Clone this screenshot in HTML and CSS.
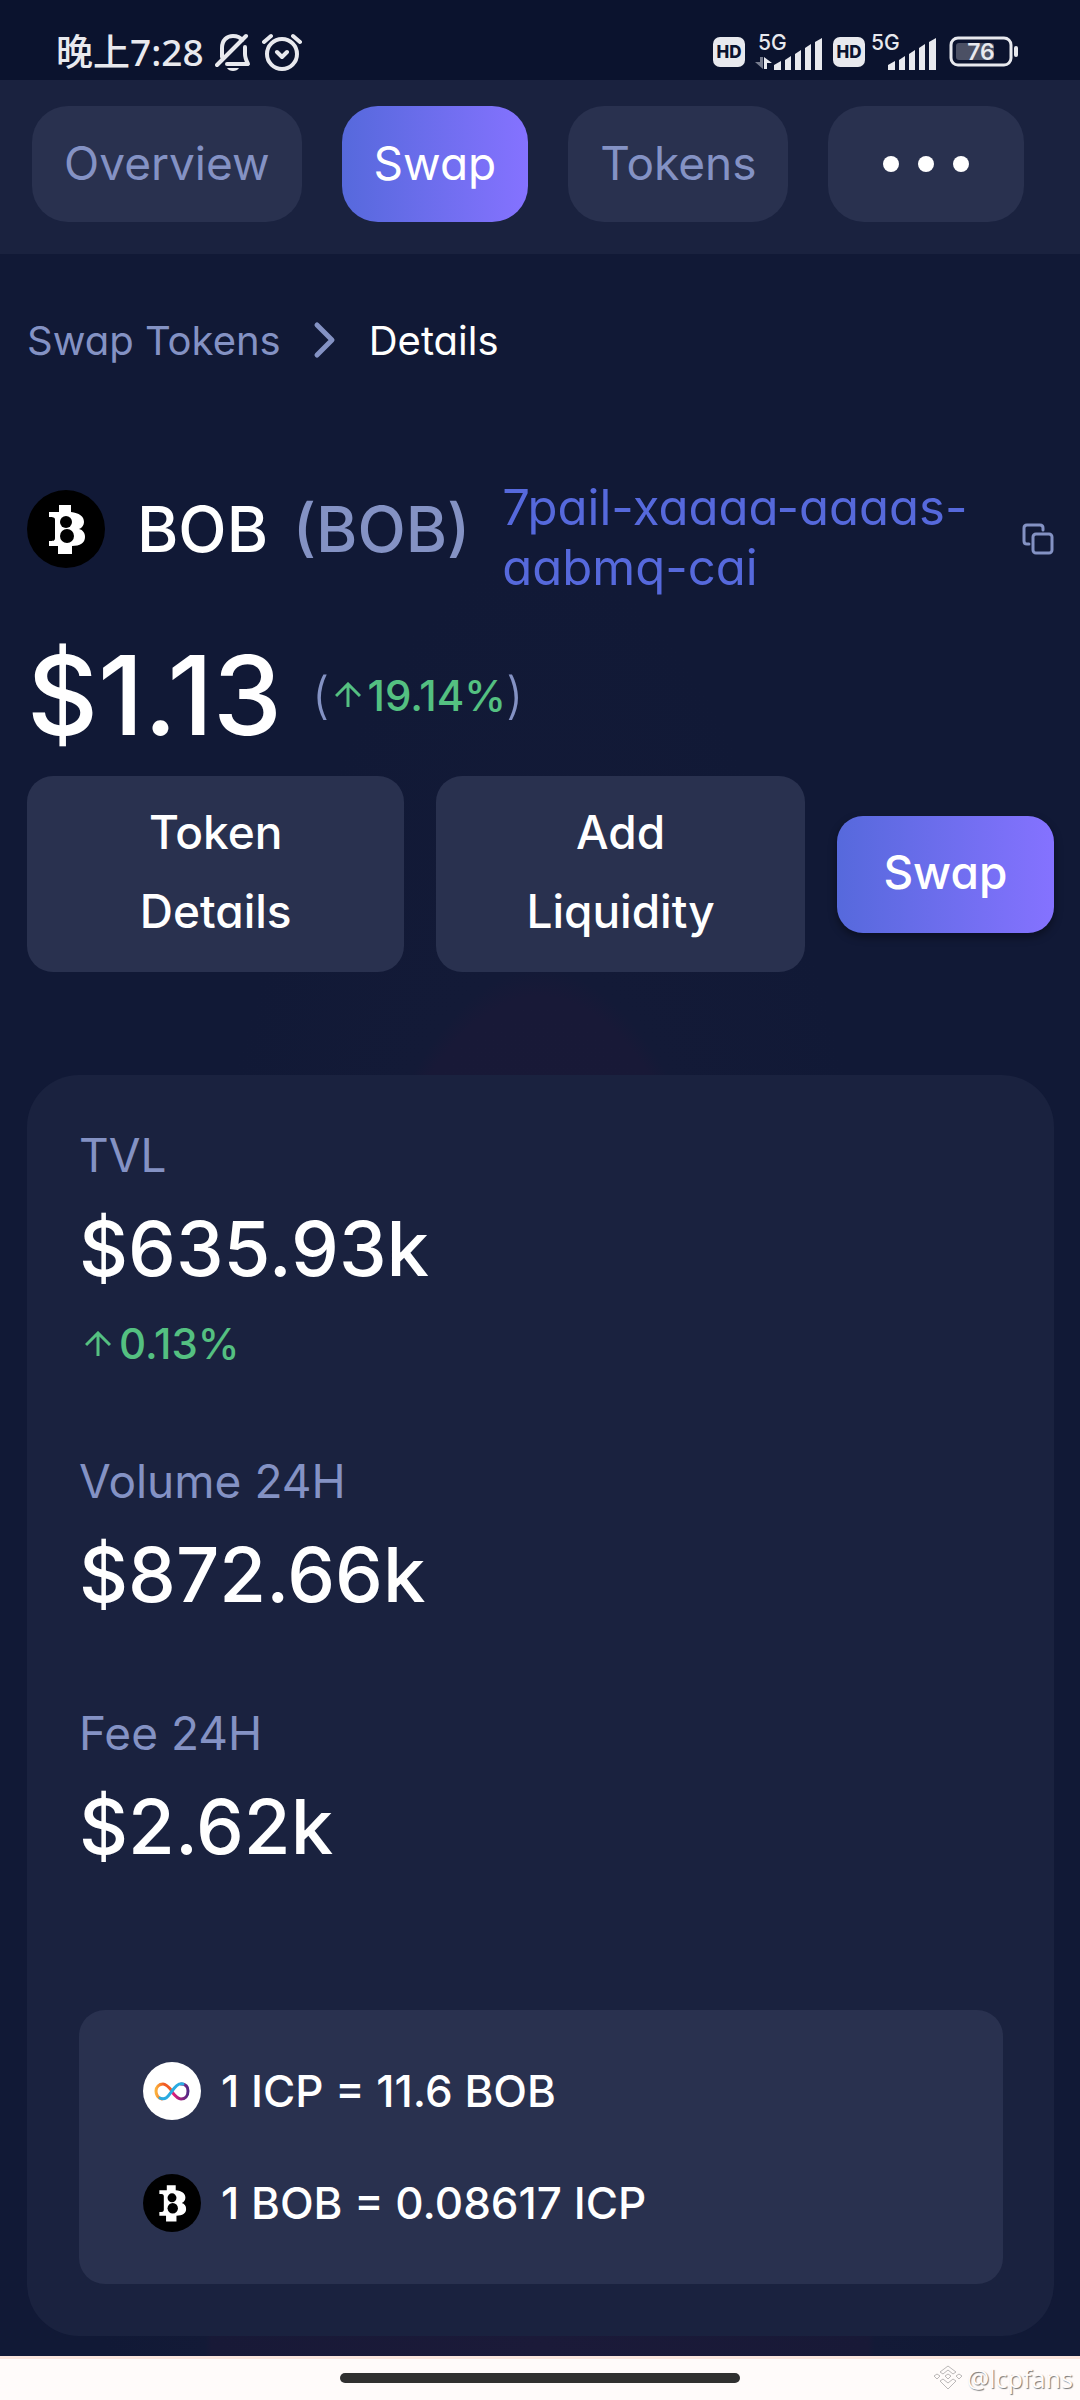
FILE: index.html
```html
<!DOCTYPE html>
<html lang="en">
<head>
<meta charset="utf-8">
<meta name="viewport" content="width=device-width, initial-scale=1">
<title>Swap – BOB details</title>
<link rel="stylesheet" href="styles.css">
</head>
<body>
<svg class="defs" aria-hidden="true">
  <symbol id="bitcoin" viewBox="0 0 78 78">
    <circle cx="39" cy="39" r="39" fill="#000"/>
    <path fill="#fff" d="M32 15h12v7c8 1 13 4 13 10c0 3-2 6-5 7c4 1 6 4 6 8c0 6-5 9-13 9v8H31v-8h-9v-5c4 0 6 0 6-3V30c0-3-2-3-6-3v-5h10z"/>
    <circle cx="39" cy="32" r="6" fill="#000"/>
    <circle cx="40" cy="46" r="7" fill="#000"/>
  </symbol>
  <symbol id="arrow-up" viewBox="0 0 26 26">
    <path d="M13 25V2M1 14L13 2l12 12" fill="none" stroke="currentColor" stroke-width="3"/>
  </symbol>
</svg>

<header class="status">
  <span class="clock">晚上7:28</span>
  <svg class="status-icon" width="36" height="38" viewBox="0 0 36 38" aria-label="Muted">
    <g fill="none" stroke="currentColor" stroke-width="4" stroke-linecap="round" stroke-linejoin="round">
      <path d="M7 24V15C7 7 12 3 18 3c4 0 7 1 9 4"/>
      <path d="M30 14v7c0 4 1 6 3 10H12"/>
      <path d="M2 32L31 3"/>
    </g>
    <path d="M12 35h12c-2 4-10 4-12 0z" fill="currentColor"/>
  </svg>
  <svg class="status-icon" width="40" height="38" viewBox="0 0 40 38" aria-label="Alarm">
    <g fill="none" stroke="currentColor" stroke-width="4" stroke-linecap="round" stroke-linejoin="round">
      <circle cx="20" cy="21" r="15"/>
      <path d="M15 19l5 5 5-5M2 9l7-6M38 9l-7-6"/>
    </g>
  </svg>
  <div class="status-right">
    <span class="hd">HD</span>
    <svg class="signal signal-wide" width="68" height="44" viewBox="0 -3 68 44">
      <text x="3" y="17" class="net">5G</text>
      <path fill="#777c8e" d="M5 24h3v12L0 29h5z"/>
      <path fill="currentColor" d="M9 36V24l8 6h-5v6zM19 37v-5l7-4v9zM30 37V27l6-4v14zM40 37V21l6-4v20zM50 37V15l6-4v26zM60 37V9l7-4v32z"/>
    </svg>
    <span class="hd">HD</span>
    <svg class="signal" width="68" height="44" viewBox="0 -3 68 44">
      <text x="2" y="17" class="net">5G</text>
      <path fill="currentColor" d="M19 37v-5l7-4v9zM30 37V27l6-4v14zM40 37V21l6-4v20zM50 37V15l6-4v26zM60 37V9l7-4v32z"/>
    </svg>
    <svg class="battery" width="70" height="32" viewBox="0 0 70 32">
      <rect x="2" y="2" width="60" height="27" rx="7" fill="none" stroke="currentColor" stroke-width="3"/>
      <rect x="7" y="7" width="38" height="17" rx="3" fill="#4b5064"/>
      <rect x="65" y="10" width="4" height="11" rx="2" fill="currentColor"/>
      <text x="32" y="24" text-anchor="middle" class="level">76</text>
    </svg>
  </div>
</header>

<nav class="tabs">
  <button class="tab">Overview</button>
  <button class="tab tab-active">Swap</button>
  <button class="tab">Tokens</button>
  <button class="tab tab-more" aria-label="More"><i></i><i></i><i></i></button>
</nav>

<main class="page">
  <div class="crumbs">
    <a href="#">Swap Tokens</a>
    <svg width="24" height="38" viewBox="0 0 24 38" fill="none" stroke="currentColor" stroke-width="5" stroke-linecap="round" stroke-linejoin="round"><path d="M4 4l15 15L4 34"/></svg>
    <span>Details</span>
  </div>

  <div class="token">
    <svg class="token-logo"><use href="#bitcoin"/></svg>
    <h1 class="token-name">BOB <span>(BOB)</span></h1>
    <a class="address" href="#">7pail-xaaaa-aaaas-aabmq-cai</a>
    <button class="copy" aria-label="Copy">
      <svg width="32" height="32" viewBox="0 0 32 32" fill="none" stroke="currentColor" stroke-width="3" stroke-linecap="round"><rect x="11" y="11" width="19" height="19" rx="3"/><path d="M7 21H5c-2 0-3-1-3-3V5c0-2 1-3 3-3h13c2 0 3 1 3 3v2"/></svg>
    </button>
  </div>

  <div class="price">
    <strong>$1.13</strong>
    <span class="paren">(</span><svg class="up"><use href="#arrow-up"/></svg><span class="change">19.14%</span><span class="paren">)</span>
  </div>

  <div class="actions">
    <button class="action">Token Details</button>
    <button class="action">Add Liquidity</button>
    <button class="action action-primary">Swap</button>
  </div>

  <section class="card">
    <dl class="stats">
      <div class="stat">
        <dt>TVL</dt>
        <dd>$635.93k</dd>
        <dd class="delta"><svg class="up"><use href="#arrow-up"/></svg>0.13%</dd>
      </div>
      <div class="stat">
        <dt>Volume 24H</dt>
        <dd>$872.66k</dd>
      </div>
      <div class="stat">
        <dt>Fee 24H</dt>
        <dd>$2.62k</dd>
      </div>
    </dl>
    <div class="rates">
      <div class="rate">
        <svg class="coin" viewBox="0 0 58 58">
          <defs>
            <linearGradient id="warm" x1="0" x2="1"><stop offset="0" stop-color="#fbb03b"/><stop offset=".5" stop-color="#f15a24"/></linearGradient>
            <linearGradient id="violet" x1="0" x2="1"><stop offset="0" stop-color="#ed1e79"/><stop offset="1" stop-color="#522785"/></linearGradient>
          </defs>
          <circle cx="29" cy="29" r="29" fill="#fff"/>
          <g fill="none" stroke-width="3" stroke-linecap="round">
            <path stroke="url(#violet)" d="M29 30C33 35 35 37 38 37c4 0 7-3 7-8s-3-7-7-7"/>
            <path stroke="url(#warm)" d="M29 29C25 24 23 22 20 22c-4 0-7 3-7 7s2 7 6 8"/>
            <path stroke="#29abe2" d="M17 36c6 3 9-3 12-7S35 21 40 22"/>
          </g>
        </svg>
        <span>1 ICP = 11.6 BOB</span>
      </div>
      <div class="rate">
        <svg class="coin"><use href="#bitcoin"/></svg>
        <span>1 BOB = 0.08617 ICP</span>
      </div>
    </div>
  </section>
</main>

<footer class="gesture">
  <div class="handle"></div>
  <div class="watermark">
    <svg width="30" height="26" viewBox="0 0 30 26" fill="none" stroke="#bbb8b8" stroke-width="1"><path d="M7 7l8-6 8 6-3 2-5-4-5 4zM1 11l3-2 3 2-3 3zM12 11l3-2 3 2-3 3zM23 11l3-2 3 2-3 3zM7 16l3-2 5 4 5-4 3 2-8 8z"/></svg>
    <span>@lcpfans</span>
  </div>
</footer>
</body>
</html>
```
FILE: styles.css
```css
* { box-sizing: border-box; margin: 0; }

body {
  min-height: 100vh;
  display: flex;
  flex-direction: column;
  background: #111936;
  color: #fff;
  font-family: Inter, "Noto Sans", "Noto Sans CJK SC", sans-serif;
  font-feature-settings: "cv11";
  font-size: 46px;
}

button {
  border: 0;
  padding: 0;
  background: none;
  color: inherit;
  font: inherit;
  font-feature-settings: inherit;
}

a { text-decoration: none; }
svg { display: block; flex: none; }
.defs { position: absolute; width: 0; height: 0; }

/* Phone status bar */
.status {
  height: 80px;
  padding: 24px 61px 0 56px;
  display: flex;
  align-items: center;
  background: #0b132e;
  color: #e8e9ee;
}
.clock {
  font-family: "Noto Sans", "Noto Sans CJK SC", sans-serif;
  font-weight: 500;
  font-size: 37px;
  line-height: 40px;
}
.status-icon { margin-left: 11px; }
.status-right {
  margin-left: auto;
  display: flex;
  align-items: center;
}
.hd {
  width: 32px;
  height: 30px;
  border-radius: 7px;
  background: #e8e9ee;
  color: #0b132e;
  font-size: 17px;
  font-weight: 800;
  line-height: 30px;
  text-align: center;
}
.signal { margin: 0 12px 0 4px; }
.signal-wide { margin: 0 10px; }
.net { font-size: 21px; font-weight: 500; fill: currentColor; }
.level { font-size: 23px; font-weight: 600; fill: currentColor; }

/* Top navigation */
.tabs {
  padding: 26px 32px 32px;
  display: flex;
  gap: 40px;
  background: #1a223f;
}
.tab {
  height: 116px;
  padding: 0 32px 2px;
  border-radius: 36px;
  background: #29314f;
  color: #8492c4;
}
.tab-active { background: linear-gradient(90deg, #5669dc, #8572ff); color: #fff; }
.tab-more {
  width: 196px;
  padding: 0;
  display: flex;
  align-items: center;
  justify-content: center;
  gap: 19px;
}
.tab-more i { width: 16px; height: 16px; border-radius: 50%; background: #fff; }

.page {
  flex: 1;
  padding: 56px 26px 20px 27px;
  background: radial-gradient(ellipse 31% 66% at 50% 100%, #1b1a39 0%, #181937 98%, #131a37 100%, transparent 130%);
}

.crumbs {
  height: 60px;
  display: flex;
  align-items: center;
  gap: 32px;
  font-size: 40px;
  color: #8492c4;
}
.crumbs a { color: inherit; }
.crumbs span { color: #fff; }

.token {
  margin-top: 90px;
  min-height: 138px;
  display: flex;
  align-items: center;
}
.token-logo { width: 78px; height: 78px; }
.token-name {
  margin: 0 24px 0 32px;
  font-size: 63px;
  font-weight: 500;
  white-space: nowrap;
}
.token-name span { color: #8492c4; margin: 0 8px; }
.address {
  flex: 1;
  margin-top: 18px;
  color: #5669dc;
  font-size: 49px;
  line-height: 60px;
}
.copy { color: #8492c4; margin-top: 20px; }

.price {
  height: 178px;
  padding-top: 16px;
  display: flex;
  align-items: center;
}
.price strong { font-size: 110px; font-weight: 500; margin-right: 30px; line-height: 140px; }
.paren { color: #8492c4; font-size: 50px; font-weight: 300; }
.up { width: 26px; height: 26px; color: #54c081; }
.price .up { margin: 0 6px; }
.change { color: #54c081; font-size: 42px; font-weight: 500; }

.actions {
  display: grid;
  grid-template-columns: 377fr 368fr 217fr;
  gap: 32px;
  align-items: center;
}
.action {
  padding: 17px 80px 21px;
  border-radius: 26px;
  background: #29314f;
  font-weight: 500;
  line-height: 79px;
}
.action-primary {
  padding: 17px 0 21px;
  background: linear-gradient(90deg, #5669dc, #8572ff);
  box-shadow: 0 4px 8px rgba(0, 0, 0, .4);
}

.card {
  margin-top: 103px;
  padding: 52px 51px 52px 52px;
  border-radius: 52px;
  background: #1a223f;
}
.stats { display: grid; gap: 76px; }
.stat dt { color: #8492c4; line-height: 56px; }
.stat dd { font-size: 76px; font-weight: 500; line-height: 110px; margin-top: 10px; }
.stat .delta {
  display: flex;
  align-items: center;
  gap: 8px;
  margin-top: 8px;
  padding-left: 6px;
  color: #54c081;
  font-size: 42px;
  line-height: 66px;
}

.rates {
  margin-top: 129px;
  padding: 49px 64px;
  display: grid;
  gap: 48px;
  border-radius: 26px;
  background: #29314f;
}
.rate {
  display: flex;
  align-items: center;
  gap: 20px;
  font-size: 44px;
  font-weight: 500;
  line-height: 64px;
}
.coin { width: 58px; height: 58px; }

/* System gesture area */
.gesture {
  height: 44px;
  padding-bottom: 4px;
  border-top: 3px solid #fae5dd;
  background: #fffbfa;
  display: grid;
  grid-template-columns: 1fr 37% 1fr;
  align-items: center;
}
.handle { grid-column: 2; height: 10px; border-radius: 5px; background: #303030; }
.watermark {
  justify-self: end;
  padding-right: 7px;
  display: flex;
  align-items: center;
  gap: 4px;
  font-family: "Noto Sans", sans-serif;
  font-size: 25px;
  line-height: 36px;
  color: #fffbfa;
  text-shadow: 1px 1px 1px #777;
}
```
